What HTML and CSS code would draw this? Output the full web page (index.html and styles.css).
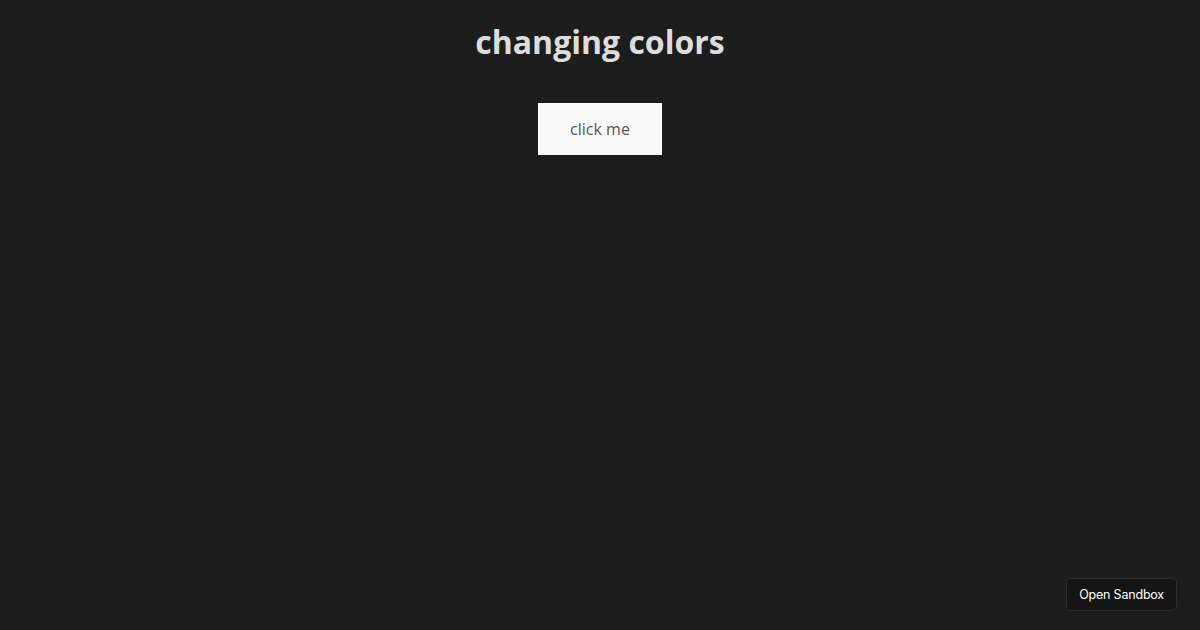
FILE: index.html
```html
<!DOCTYPE html>
<html lang="en">
<head>
    <meta charset="UTF-8">
    <meta name="viewport" content="width=device-width, initial-scale=1.0">
    <title>changing colors</title>
    <link rel="stylesheet" href="styles.css">
</head>
<body>
    <div class="app">
        <h1>changing colors</h1>
        <button class="color-btn">click me</button>
    </div>

    <a class="sandbox-link" href="#">Open Sandbox</a>
</body>
</html>
```

FILE: styles.css
```css
body {
    margin: 0;
    font-family: "Open Sans", sans-serif;
    background-color: #1d1d1d;
    color: #dddddd;
    min-height: 100vh;
}
.app {
    display: flex;
    flex-direction: column;
    align-items: center;
    padding-top: 20px;
}
h1 {
    margin: 0;
    font-size: 32px;
    font-weight: 700;
    line-height: 44px;
}
.color-btn {
    margin-top: 39px;
    width: 124px;
    height: 52px;
    border: none;
    background-color: #fafafa;
    color: #555555;
    font-family: "Open Sans", sans-serif;
    font-size: 16px;
    cursor: pointer;
}
.sandbox-link {
    position: fixed;
    right: 23px;
    bottom: 19px;
    padding: 8px 12px;
    background-color: #151515;
    border: 1px solid #2e2e2e;
    border-radius: 4px;
    color: #ffffff;
    font-family: Inter, sans-serif;
    font-size: 12.5px;
    letter-spacing: -0.2px;
    line-height: 15px;
    text-decoration: none;
}
```
